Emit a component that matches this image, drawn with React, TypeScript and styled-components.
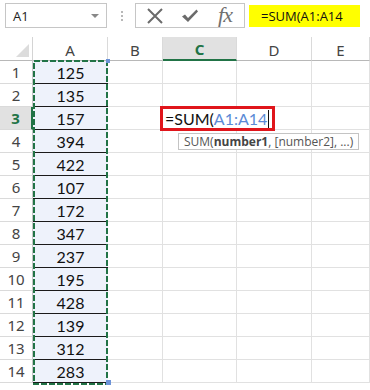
import React from 'react';
import styled, {createGlobalStyle} from 'styled-components';

const GlobalStyle = createGlobalStyle`
    html, body {
        margin: 0;
        padding: 0;
        background: #ffffff;
    }
`;

const values = [125, 135, 157, 394, 422, 107, 172, 347, 237, 195, 428, 139, 312, 283];
const columns = ['A', 'B', 'C', 'D', 'E'];
const colWidths = [75, 55, 74, 75, 58];
const ROW_H = 23;
const HEAD_H = 24;
const GREEN = '#217346';

const Sheet = styled.div`
    position: relative;
    width: 370px;
    height: 390px;
    overflow: hidden;
    font-family: Lato, 'Liberation Sans', sans-serif;
`;

const Toolbar = styled.div`
    display: flex;
    align-items: flex-start;
    height: 37px;
    padding: 3px 0 0 5px;
    box-sizing: border-box;
`;

const NameBox = styled.div`
    display: flex;
    align-items: center;
    justify-content: space-between;
    width: 102px;
    height: 25px;
    box-sizing: border-box;
    border: 1px solid #c6c6c6;
    padding: 0 7px 0 7px;
    font-family: 'Open Sans', sans-serif;
    font-size: 13px;
    color: #222;
`;

const DropArrow = styled.span`
    width: 0;
    height: 0;
    border-left: 4px solid transparent;
    border-right: 4px solid transparent;
    border-top: 4px solid #888;
`;

const Dots = styled.div`
    display: flex;
    flex-direction: column;
    gap: 2px;
    margin: 8px 12px 0 14px;
    span {
        width: 2px;
        height: 2px;
        background: #b8b8b8;
    }
`;

const FxBox = styled.div`
    display: flex;
    align-items: center;
    width: 110px;
    height: 25px;
    box-sizing: border-box;
    border: 1px solid #c6c6c6;
    padding-left: 9px;
`;

const IconSlot = styled.div<{ w: number }>`
    width: ${p => p.w}px;
    display: flex;
    align-items: center;
    justify-content: center;
`;

const FxText = styled.span`
    font-family: 'Liberation Serif', serif;
    font-style: italic;
    font-size: 22px;
    color: #707070;
    letter-spacing: -1px;
    line-height: 1;
    margin-top: -2px;
`;

const FormulaInput = styled.div`
    margin: 2px 0 0 4px;
    width: 111px;
    height: 22px;
    background: #ffff00;
    display: flex;
    align-items: center;
    padding-left: 12px;
    box-sizing: border-box;
    font-family: 'Open Sans', sans-serif;
    font-size: 13px;
    color: #111;
`;

const Grid = styled.div`
    position: relative;
    display: grid;
    grid-template-columns: 33px ${colWidths.map(w => `${w}px`).join(' ')};
    grid-template-rows: ${HEAD_H}px repeat(14, ${ROW_H}px);
`;

const Corner = styled.div`
    position: relative;
    border-right: 1px solid #d4d4d4;
    border-bottom: 1px solid #b8b8b8;
    box-sizing: border-box;
    &::after {
        content: '';
        position: absolute;
        right: 3px;
        bottom: 3px;
        width: 0;
        height: 0;
        border-left: 13px solid transparent;
        border-bottom: 13px solid #dcdcdc;
    }
`;

const ColHead = styled.div<{ active?: boolean }>`
    display: flex;
    align-items: center;
    justify-content: center;
    box-sizing: border-box;
    font-family: 'Noto Sans', sans-serif;
    font-size: 15px;
    padding-top: 2px;
    color: ${p => (p.active ? GREEN : '#444')};
    font-weight: ${p => (p.active ? 700 : 400)};
    background: ${p => (p.active ? '#e1e1e1' : '#fff')};
    border-right: 1px solid #dadada;
    border-bottom: ${p => (p.active ? `2px solid ${GREEN}` : '1px solid #b8b8b8')};
`;

const RowHead = styled.div<{ active?: boolean }>`
    display: flex;
    align-items: center;
    justify-content: center;
    box-sizing: border-box;
    font-family: 'Noto Sans', sans-serif;
    font-size: 15px;
    color: ${p => (p.active ? GREEN : '#444')};
    font-weight: ${p => (p.active ? 700 : 400)};
    background: ${p => (p.active ? '#e1e1e1' : '#fff')};
    border-bottom: 1px solid #dadada;
    border-right: ${p => (p.active ? `2px solid ${GREEN}` : '1px solid #c6c6c6')};
`;

const DataCell = styled.div`
    display: flex;
    align-items: center;
    justify-content: center;
    box-sizing: border-box;
    background: #eef2fb;
    border-bottom: 1px solid #1a1a1a;
    font-size: 16px;
    color: #111;
    padding-top: 1px;
`;

const EmptyCell = styled.div`
    position: relative;
    box-sizing: border-box;
    border-right: 1px solid #e1e1e1;
    border-bottom: 1px solid #e1e1e1;
`;

const Marquee = styled.svg`
    position: absolute;
    left: 33px;
    top: ${HEAD_H - 1}px;
    pointer-events: none;
`;

const Handle = styled.div<{ top: number; size: number }>`
    position: absolute;
    left: ${p => 108 - Math.floor(p.size / 2)}px;
    top: ${p => p.top}px;
    width: ${p => p.size}px;
    height: ${p => p.size}px;
    background: #6d93d8;
`;

const Editor = styled.div`
    position: absolute;
    left: -3px;
    top: -1px;
    width: 115px;
    height: 25px;
    box-sizing: border-box;
    border: 3px solid #e0151b;
    display: flex;
    align-items: center;
    padding-left: 2px;
    font-size: 16px;
    color: #111;
    background: #fff;
    z-index: 2;
    white-space: nowrap;
`;

const RangeRef = styled.span`
    color: #5b8ad6;
`;

const Caret = styled.span`
    display: inline-block;
    width: 1px;
    height: 18px;
    background: #111;
    margin-left: 1px;
`;

const Tooltip = styled.div`
    position: absolute;
    left: 15px;
    top: 26px;
    height: 17px;
    box-sizing: border-box;
    border: 1px solid #c4c4c4;
    background: #fff;
    padding: 0 5px;
    display: flex;
    align-items: center;
    font-family: 'Open Sans', sans-serif;
    font-size: 12px;
    color: #555;
    white-space: nowrap;
    z-index: 3;
    b {
        font-weight: 700;
        color: #444;
    }
`;

const CrossIcon = () => (
    <svg width="18" height="18" viewBox="0 0 18 18">
        <path d="M2 2 L16 16 M16 2 L2 16" stroke="#6b6b6b" strokeWidth="2" fill="none" />
    </svg>
);

const CheckIcon = () => (
    <svg width="18" height="16" viewBox="0 0 18 16">
        <path d="M1 8.5 L4 6.5 L7 10 L15.5 1.5 L17 3.5 L7 14 Z" fill="#6b6b6b" />
    </svg>
);

const App = () => {
    const totalH = 14 * ROW_H;
    return (
        <Sheet>
            <GlobalStyle />
            <Toolbar>
                <NameBox>
                    A1
                    <DropArrow />
                </NameBox>
                <Dots>
                    <span />
                    <span />
                    <span />
                </Dots>
                <FxBox>
                    <IconSlot w={20}>
                        <CrossIcon />
                    </IconSlot>
                    <IconSlot w={50}>
                        <CheckIcon />
                    </IconSlot>
                    <IconSlot w={20}>
                        <FxText>fx</FxText>
                    </IconSlot>
                </FxBox>
                <FormulaInput>=SUM(A1:A14</FormulaInput>
            </Toolbar>
            <Grid>
                <Corner />
                {columns.map(c => (
                    <ColHead key={c} active={c === 'C'}>
                        {c}
                    </ColHead>
                ))}
                {values.map((v, i) => (
                    <React.Fragment key={i}>
                        <RowHead active={i === 2}>{i + 1}</RowHead>
                        <DataCell>{v}</DataCell>
                        <EmptyCell />
                        <EmptyCell>
                            {i === 2 && (
                                <>
                                    <Editor>
                                        =SUM(<RangeRef>A1:A14</RangeRef>
                                        <Caret />
                                    </Editor>
                                    <Tooltip>
                                        SUM(<b>number1</b>, [number2], ...)
                                    </Tooltip>
                                </>
                            )}
                        </EmptyCell>
                        <EmptyCell />
                        <EmptyCell />
                    </React.Fragment>
                ))}
                <Marquee width="76" height={totalH + 4} viewBox={`0 0 76 ${totalH + 4}`}>
                    <rect
                        x="1"
                        y="1"
                        width="73"
                        height={totalH + 1}
                        fill="none"
                        stroke={GREEN}
                        strokeWidth="2"
                        strokeDasharray="6 2"
                    />
                </Marquee>
                <Handle top={HEAD_H - 2} size={4} />
                <Handle top={HEAD_H + totalH - 3} size={5} />
            </Grid>
        </Sheet>
    );
};

export default App;
